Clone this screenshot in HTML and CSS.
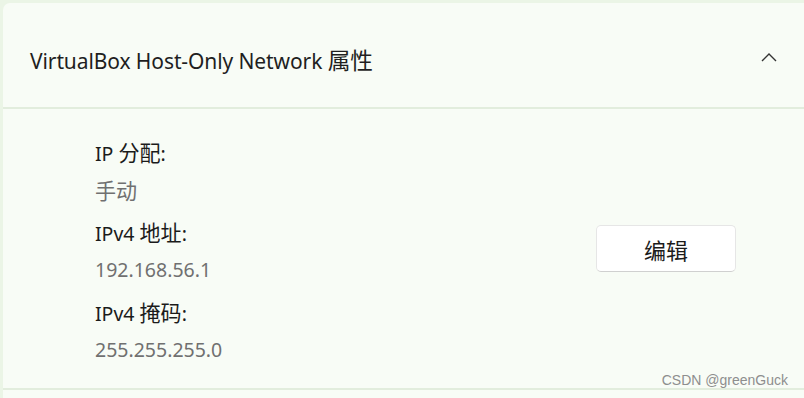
FILE: index.html
```html
<!DOCTYPE html>
<html>
<head>
<meta charset="utf-8">
<link rel="stylesheet" href="styles.css">
</head>
<body>
<div class="frame">
  <div class="card">
    <div class="header">
      <span class="title">VirtualBox Host-Only Network <span class="cjk">属性</span></span>
      <svg class="chevron" width="16" height="10" viewBox="0 0 16 10"><path d="M1 9 L8 2 L15 9" fill="none" stroke="#333" stroke-width="1.4"/></svg>
    </div>
    <div class="body">
      <div class="info">
        <div class="label">IP <span class="cjk">分配</span>:</div>
        <div class="value"><span class="cjk">手动</span></div>
        <div class="label">IPv4 <span class="cjk">地址</span>:</div>
        <div class="value">192.168.56.1</div>
        <div class="label">IPv4 <span class="cjk">掩码</span>:</div>
        <div class="value">255.255.255.0</div>
      </div>
      <div class="actions">
        <button class="btn">编辑</button>
      </div>
      <span class="mark">CSDN @greenGuck</span>
    </div>
  </div>
</div>
</body>
</html>
```
FILE: styles.css
```css
html, body { margin: 0; padding: 0; }
body {
  width: 804px; height: 398px; overflow: hidden;
  background: #ebf5e6;
  font-family: "Noto Sans", "Noto Sans CJK SC", sans-serif;
}
.frame { padding: 3px 0 0 3px; height: 395px; }
.card {
  background: #f8fcf6;
  border-top-left-radius: 7px;
  height: 100%;
  display: flex; flex-direction: column;
}
.cjk { font-family: "Noto Sans CJK SC", sans-serif; font-size: 1.08em; }
.header {
  height: 106px;
  border-bottom: 2px solid #e2eddd;
  display: flex; align-items: center; justify-content: space-between;
  padding: 9px 27px 0 27px;
  box-sizing: border-box;
  flex-shrink: 0;
}
.title { font-size: 21px; color: #1f1f1f; letter-spacing: -0.1px; }
.chevron { margin-bottom: 6px; }
.body {
  height: 281px;
  border-bottom: 2px solid #e2eddd;
  display: flex; align-items: flex-start;
  box-sizing: border-box;
  padding-left: 92px;
  flex-shrink: 0;
  position: relative;
}
.info { padding-top: 24px; width: 501px; }
.label { font-size: 19.5px; color: #1b1b1b; height: 38px; line-height: 38px; }
.value { font-size: 19.5px; color: #707070; height: 42px; line-height: 38px; }
.actions { padding-top: 116px; }
.btn {
  width: 140px; height: 47px;
  background: #ffffff;
  border: 1px solid #e6e6e6;
  border-bottom-color: #d0d0d0;
  border-radius: 5px;
  font-family: "Noto Sans CJK SC", sans-serif;
  font-size: 22px; color: #1b1b1b;
  padding: 0;
}
.mark {
  position: absolute; right: 16px; bottom: 0;
  line-height: 16px;
  font-family: "Liberation Sans", sans-serif;
  font-size: 14px; color: #8e8e8e;
}
```
